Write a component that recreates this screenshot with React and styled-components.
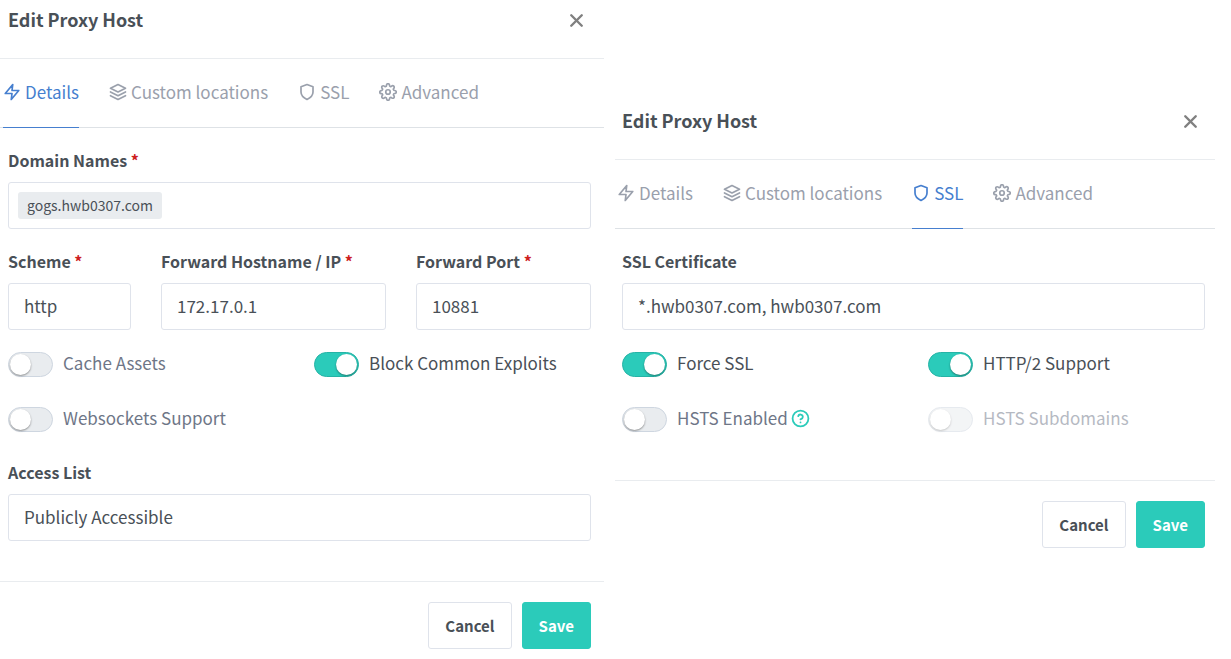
import React, { useState } from 'react';
import styled, { createGlobalStyle } from 'styled-components';
import {
  FiHelpCircle,
  FiLayers,
  FiSettings,
  FiShield,
  FiX,
  FiZap,
} from 'react-icons/fi';

const TABS = [
  { id: 'details', label: 'Details', Icon: FiZap },
  { id: 'locations', label: 'Custom locations', Icon: FiLayers },
  { id: 'ssl', label: 'SSL', Icon: FiShield },
  { id: 'advanced', label: 'Advanced', Icon: FiSettings },
];

const Dialog = ({ active, inset, children }) => (
  <Panel $inset={inset} aria-label="Edit Proxy Host">
    <Header>
      <Title>Edit Proxy Host</Title>
      <Close type="button" aria-label="Close">
        <FiX size={21} />
      </Close>
    </Header>
    <Tabs>
      {TABS.map(({ id, label, Icon }) => (
        <Tab key={id} href={`#${id}`} $active={id === active}>
          <Icon size={18} />
          {label}
        </Tab>
      ))}
    </Tabs>
    <Body>{children}</Body>
    <Footer>
      <Button type="button">Cancel</Button>
      <Button type="button" $primary>
        Save
      </Button>
    </Footer>
  </Panel>
);

const Field = ({ id, label, required, children }) => (
  <div>
    <Label htmlFor={id}>
      {label}
      {required && <Required> *</Required>}
    </Label>
    {children}
  </div>
);

const Switch = ({ label, defaultChecked = false, disabled = false, help }) => {
  const [checked, setChecked] = useState(defaultChecked);

  return (
    <SwitchLabel $checked={checked} $disabled={disabled}>
      <Toggle
        type="checkbox"
        checked={checked}
        disabled={disabled}
        onChange={(e) => setChecked(e.target.checked)}
      />
      <SwitchText>
        {label}
        {help && <FiHelpCircle size={19} />}
      </SwitchText>
    </SwitchLabel>
  );
};

const DetailsDialog = () => (
  <Dialog active="details" inset="left">
    <Field id="domains" label="Domain Names" required>
      <TagBox>
        <Tag>gogs.hwb0307.com</Tag>
        <TagInput id="domains" type="text" />
      </TagBox>
    </Field>
    <FieldRow>
      <Field id="scheme" label="Scheme" required>
        <Select id="scheme" defaultValue="http">
          <option>http</option>
          <option>https</option>
        </Select>
      </Field>
      <Field id="host" label="Forward Hostname / IP" required>
        <Input id="host" type="text" defaultValue="172.17.0.1" />
      </Field>
      <Field id="port" label="Forward Port" required>
        <Input id="port" type="text" defaultValue="10881" />
      </Field>
    </FieldRow>
    <Switches>
      <Switch label="Cache Assets" />
      <Switch label="Block Common Exploits" defaultChecked />
      <Switch label="Websockets Support" />
    </Switches>
    <Field id="access" label="Access List">
      <Select id="access">
        <option>Publicly Accessible</option>
      </Select>
    </Field>
  </Dialog>
);

const SslDialog = () => (
  <Dialog active="ssl" inset="right">
    <Field id="certificate" label="SSL Certificate">
      <Select id="certificate">
        <option>*.hwb0307.com, hwb0307.com</option>
      </Select>
    </Field>
    <Switches>
      <Switch label="Force SSL" defaultChecked />
      <Switch label="HTTP/2 Support" defaultChecked />
      <Switch label="HSTS Enabled" help />
      <Switch label="HSTS Subdomains" disabled />
    </Switches>
  </Dialog>
);

export default function App() {
  return (
    <>
      <GlobalStyle />
      <Page>
        <DetailsDialog />
        <SslDialog />
      </Page>
    </>
  );
}

const GlobalStyle = createGlobalStyle`
  * {
    box-sizing: border-box;
  }
  body {
    margin: 0;
    background: #fff;
    color: #495057;
    font-family: 'Noto Sans CJK SC', 'Noto Sans', sans-serif;
    font-size: 17px;
    line-height: 24px;
  }
  input,
  select,
  button {
    font: inherit;
    color: inherit;
  }
`;

const Page = styled.main`
  display: grid;
  grid-template-columns: 604fr 600fr;
  column-gap: 11px;
  align-items: center;
  padding-right: 16px;
`;
const Panel = styled.section`
  --start: ${({ $inset }) => ($inset === 'left' ? '8px' : '7px')};
  --end: ${({ $inset }) => ($inset === 'left' ? '13px' : '10px')};
`;
const Header = styled.header`
  display: flex;
  justify-content: space-between;
  align-items: center;
  padding: 7px var(--end) 25px var(--start);
  border-bottom: 1px solid #e9ecef;
`;
const Title = styled.h1`
  margin: 0;
  padding-bottom: 2px;
  font-size: 18px;
  font-weight: 700;
  line-height: 24px;
`;
const Close = styled.button`
  display: flex;
  margin-right: 4px;
  padding: 0;
  border: 0;
  background: none;
  color: #808080;

  svg {
    stroke-width: 2.75;
  }
`;
const Tabs = styled.nav`
  display: flex;
  gap: 30px;
  height: 69px;
  padding-left: calc(var(--start) - 5px);
  border-bottom: 1px solid #dee2e6;
`;
const Tab = styled.a`
  display: flex;
  align-items: center;
  gap: 4px;
  height: 69px;
  padding-bottom: 2px;
  border-bottom: 1px solid
    ${({ $active }) => ($active ? '#467fcf' : 'transparent')};
  color: ${({ $active }) => ($active ? '#467fcf' : '#9aa0ac')};
  text-decoration: none;
  white-space: nowrap;

  svg {
    stroke-width: 2.25;
  }
`;
const Body = styled.div`
  display: flex;
  flex-direction: column;
  gap: 22px;
  padding: 22px var(--end) 40px var(--start);
`;
const FieldRow = styled.div`
  display: grid;
  grid-template-columns: 123fr 225fr 175fr;
  gap: 30px;
`;
const Label = styled.label`
  display: block;
  margin-bottom: 12px;
  font-size: 16px;
  font-weight: 700;
  line-height: 20px;
  white-space: nowrap;
`;
const Required = styled.span`
  color: #cd201f;
`;
const Input = styled.input`
  display: block;
  width: 100%;
  height: 47px;
  padding: 0 15px 2px;
  border: 1px solid #dfe3eb;
  border-radius: 3px;
  background: #fff;
`;
const Select = styled(Input).attrs({ as: 'select' })`
  appearance: none;
`;
const TagBox = styled.div`
  display: flex;
  align-items: center;
  gap: 8px;
  height: 47px;
  padding: 0 9px;
  border: 1px solid #dfe3eb;
  border-radius: 3px;
`;
const Tag = styled.span`
  padding: 1px 9px 2px;
  border-radius: 3px;
  background: #e9ecef;
  font-size: 14px;
`;
const TagInput = styled.input`
  flex: 1;
  min-width: 0;
  border: 0;
  outline: 0;
  background: none;
`;
const Switches = styled.div`
  display: grid;
  grid-template-columns: 1fr 1fr;
  gap: 30px 29px;
  margin-bottom: 8px;
`;
const SwitchLabel = styled.label`
  display: flex;
  align-items: center;
  height: 25px;
  color: ${({ $checked }) => ($checked ? '#495057' : '#6e7687')};
  opacity: ${({ $disabled }) => ($disabled ? 0.5 : 1)};
  white-space: nowrap;
`;
const SwitchText = styled.span`
  display: flex;
  align-items: center;
  gap: 3px;
  margin-left: 10px;
  padding-bottom: 3px;

  svg {
    color: #2bcbba;
    stroke-width: 2.25;
  }
`;
const Toggle = styled.input`
  appearance: none;
  flex: none;
  width: 45px;
  height: 25px;
  margin: 0;
  padding: 1px;
  border: 1px solid #ced6e0;
  border-radius: 13px;
  background: #e9ecef;

  &::before {
    content: '';
    display: block;
    width: 21px;
    height: 21px;
    border-radius: 50%;
    background: #fff;
    box-shadow: 0 1px 2px rgba(0, 0, 0, 0.4);
  }

  &:checked {
    border-color: #26b3a6;
    background: #2bcbba;
  }

  &:checked::before {
    margin-left: auto;
  }
`;
const Footer = styled.footer`
  display: flex;
  justify-content: flex-end;
  gap: 10px;
  padding: 20px var(--end) 0 var(--start);
  border-top: 1px solid #e9ecef;
`;
const Button = styled.button`
  height: 47px;
  padding: 0 16px;
  border: 1px solid ${({ $primary }) => ($primary ? '#2bcbba' : '#dfe3eb')};
  border-radius: 3px;
  background: ${({ $primary }) => ($primary ? '#2bcbba' : '#fff')};
  color: ${({ $primary }) => ($primary ? '#fff' : '#495057')};
  font-size: 15px;
  font-weight: 700;
`;
